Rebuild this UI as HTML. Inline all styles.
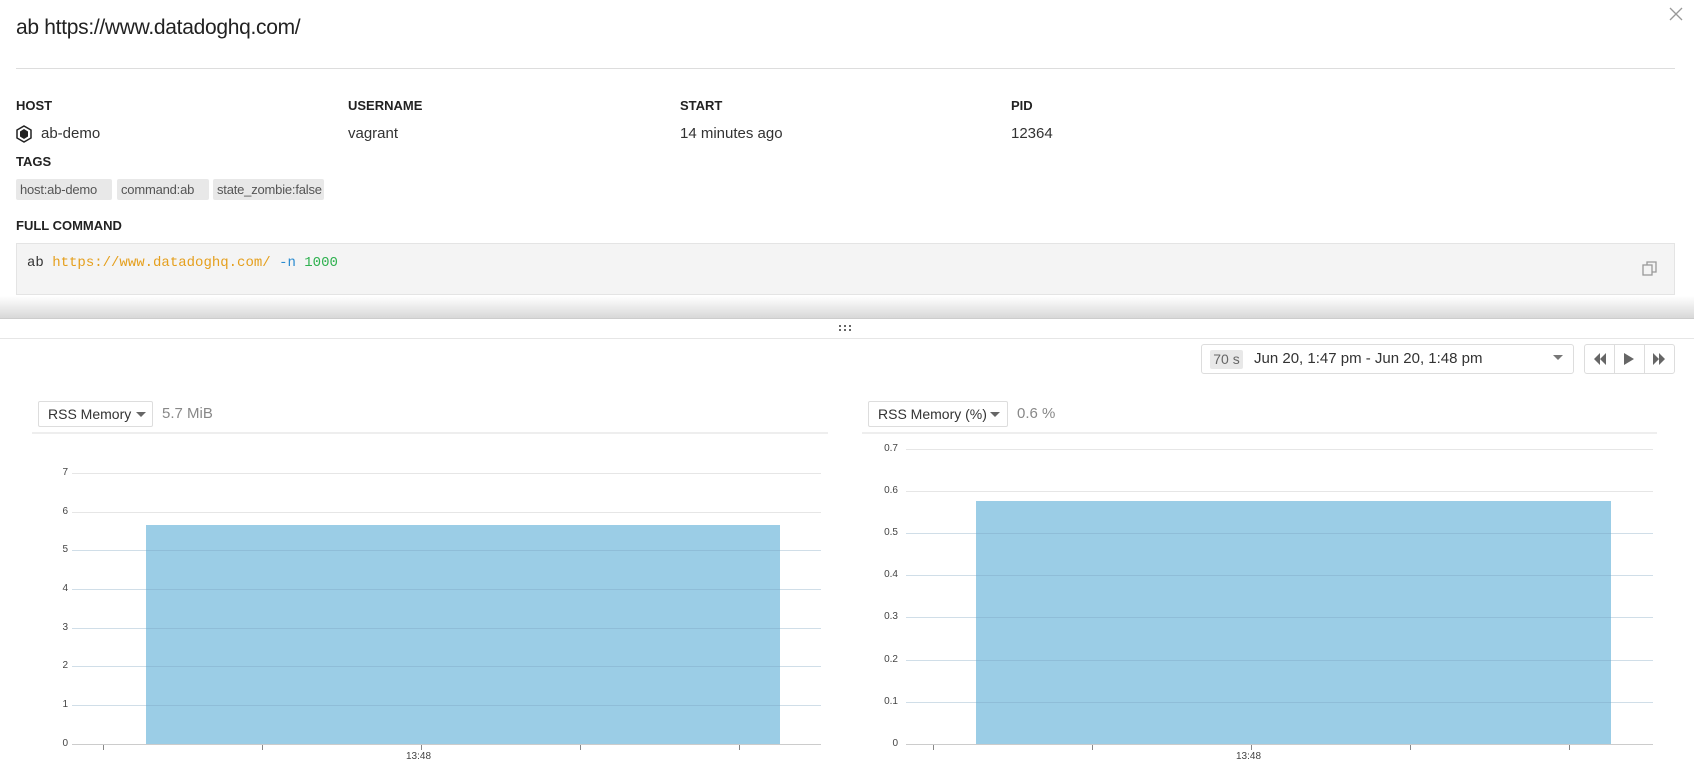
<!DOCTYPE html>
<html><head><meta charset="utf-8"><style>
*{margin:0;padding:0;box-sizing:border-box}
body{width:1694px;height:771px;overflow:hidden;background:#fff;font-family:"Liberation Sans",sans-serif;color:#333;position:relative}
.a{position:absolute}
.lbl{font-size:13px;font-weight:bold;color:#222}
.val{font-size:15px;color:#333}
.tag{position:absolute;top:179px;height:21px;background:#e8e8e8;border-radius:2px;font-size:13px;color:#555;line-height:21px;padding:0 4px;white-space:nowrap;letter-spacing:-0.2px}
.g{position:absolute;height:1px;background:#e6e6e6}
.yl{position:absolute;font-size:10px;color:#444;text-align:right;width:20px}
.tk{position:absolute;width:1px;height:5px;background:#888}
</style></head><body>
<div class="a" style="left:16px;top:16px;font-size:21px;color:#222;letter-spacing:-0.3px">ab https://www.datadoghq.com/</div>
<svg class="a" style="left:1668px;top:6px" width="16" height="16"><path d="M2 2L14 14M14 2L2 14" stroke="#999" stroke-width="1.3"/></svg>
<div class="g" style="left:16px;top:68px;width:1659px;background:#ddd"></div>
<div class="a lbl" style="left:16px;top:98px">HOST</div>
<div class="a lbl" style="left:348px;top:98px">USERNAME</div>
<div class="a lbl" style="left:680px;top:98px">START</div>
<div class="a lbl" style="left:1011px;top:98px">PID</div>
<svg class="a" style="left:16px;top:125px" width="16" height="18"><path d="M8 1L15 5V13L8 17L1 13V5Z" fill="none" stroke="#222" stroke-width="1.5"/><path d="M8 4L12 6.5V11.5L8 14L4 11.5V6.5Z" fill="#222"/></svg>
<div class="a val" style="left:41px;top:125px">ab-demo</div>
<div class="a val" style="left:348px;top:125px">vagrant</div>
<div class="a val" style="left:680px;top:125px">14 minutes ago</div>
<div class="a val" style="left:1011px;top:125px">12364</div>
<div class="a lbl" style="left:16px;top:154px">TAGS</div>
<div class="tag" style="left:16px;width:96px">host:ab-demo</div>
<div class="tag" style="left:117px;width:92px">command:ab</div>
<div class="tag" style="left:213px;width:111px">state_zombie:false</div>
<div class="a lbl" style="left:16px;top:218px">FULL COMMAND</div>
<div class="a" style="left:16px;top:243px;width:1659px;height:52px;background:#f4f4f4;border:1px solid #e4e4e4"></div>
<div class="a" style="left:27px;top:255px;font-family:'Liberation Mono',monospace;font-size:14px;color:#333">ab <span style="color:#e59f1c">https://www.datadoghq.com/</span> <span style="color:#2a8bd0">-n</span> <span style="color:#2fb14f">1000</span></div>
<svg class="a" style="left:1641px;top:260px" width="18" height="18"><rect x="2" y="5" width="9" height="10" fill="none" stroke="#999" stroke-width="1.3"/><path d="M6 5V2H15V12H11" fill="none" stroke="#999" stroke-width="1.3"/></svg>
<div class="a" style="left:0;top:296px;width:1694px;height:22px;background:linear-gradient(#fff,#d8d8d8)"></div>
<div class="a" style="left:0;top:318px;width:1694px;height:1px;background:#ccc"></div>
<svg class="a" style="left:838px;top:324px" width="16" height="8"><g fill="#666"><rect x="1" y="1" width="2" height="2"/><rect x="6" y="1" width="2" height="2"/><rect x="11" y="1" width="2" height="2"/><rect x="1" y="5" width="2" height="2"/><rect x="6" y="5" width="2" height="2"/><rect x="11" y="5" width="2" height="2"/></g></svg>
<div class="g" style="left:0;top:338px;width:1694px"></div>
<div class="a" style="left:1201px;top:344px;width:373px;height:30px;border:1px solid #ddd;border-radius:3px"></div>
<div class="a" style="left:1210px;top:350px;width:33px;height:19px;background:#e8e8e8;border-radius:2px;font-size:14px;color:#666;line-height:19px;text-align:center">70 s</div>
<div class="a" style="left:1254px;top:350px;font-size:15px;color:#333">Jun 20, 1:47 pm - Jun 20, 1:48 pm</div>
<svg class="a" style="left:1553px;top:355px" width="10" height="6"><path d="M0 0H10L5 5Z" fill="#777"/></svg>
<div class="a" style="left:1584px;top:344px;width:91px;height:30px;border:1px solid #ddd;border-radius:3px"></div>
<div class="a" style="left:1614px;top:344px;width:1px;height:30px;background:#ddd"></div>
<div class="a" style="left:1644px;top:344px;width:1px;height:30px;background:#ddd"></div>
<svg class="a" style="left:1584px;top:344px" width="91" height="30"><path d="M16 9L10 15L16 21ZM22 9L16 15L22 21Z" fill="#666"/><path d="M40 9L50 15L40 21Z" fill="#666"/><path d="M69 9L75 15L69 21ZM75 9L81 15L75 21Z" fill="#666"/></svg>

<!-- left chart -->
<div class="a" style="left:38px;top:401px;width:115px;height:26px;border:1px solid #ddd;border-radius:2px;font-size:14px;color:#333;line-height:24px;padding-left:9px">RSS Memory</div>
<svg class="a" style="left:136px;top:412px" width="10" height="6"><path d="M0 0H10L5 5Z" fill="#666"/></svg>
<div class="a" style="left:162px;top:405px;font-size:15px;color:#888">5.7 MiB</div>
<div class="g" style="left:32px;top:432px;width:796px;height:2px;background:#eee"></div>
<div class="a" style="left:146px;top:525px;width:634px;height:219px;background:#9bcde6"></div>
<div class="g" style="left:72px;top:473px;width:749px"></div>
<div class="g" style="left:72px;top:512px;width:749px"></div>
<div class="g" style="left:72px;top:550px;width:749px;background:rgba(120,160,190,.35)"></div>
<div class="g" style="left:72px;top:589px;width:749px;background:rgba(120,160,190,.35)"></div>
<div class="g" style="left:72px;top:628px;width:749px;background:rgba(120,160,190,.35)"></div>
<div class="g" style="left:72px;top:666px;width:749px;background:rgba(120,160,190,.35)"></div>
<div class="g" style="left:72px;top:705px;width:749px;background:rgba(120,160,190,.35)"></div>
<div class="g" style="left:72px;top:744px;width:749px;background:#ccc"></div>
<div class="yl" style="left:48px;top:467px">7</div>
<div class="yl" style="left:48px;top:506px">6</div>
<div class="yl" style="left:48px;top:544px">5</div>
<div class="yl" style="left:48px;top:583px">4</div>
<div class="yl" style="left:48px;top:622px">3</div>
<div class="yl" style="left:48px;top:660px">2</div>
<div class="yl" style="left:48px;top:699px">1</div>
<div class="yl" style="left:48px;top:738px">0</div>
<div class="tk" style="left:103px;top:745px"></div>
<div class="tk" style="left:262px;top:745px"></div>
<div class="tk" style="left:421px;top:745px"></div>
<div class="tk" style="left:580px;top:745px"></div>
<div class="tk" style="left:739px;top:745px"></div>
<div class="a" style="left:406px;top:751px;font-size:10px;color:#444">13:48</div>

<!-- right chart -->
<div class="a" style="left:868px;top:401px;width:140px;height:26px;border:1px solid #ddd;border-radius:2px;font-size:14px;color:#333;line-height:24px;padding-left:9px">RSS Memory (%)</div>
<svg class="a" style="left:990px;top:412px" width="10" height="6"><path d="M0 0H10L5 5Z" fill="#666"/></svg>
<div class="a" style="left:1017px;top:405px;font-size:15px;color:#888">0.6 %</div>
<div class="g" style="left:862px;top:432px;width:795px;height:2px;background:#eee"></div>
<div class="a" style="left:976px;top:501px;width:635px;height:243px;background:#9bcde6"></div>
<div class="g" style="left:906px;top:449px;width:747px"></div>
<div class="g" style="left:906px;top:491px;width:747px"></div>
<div class="g" style="left:906px;top:533px;width:747px;background:rgba(120,160,190,.35)"></div>
<div class="g" style="left:906px;top:575px;width:747px;background:rgba(120,160,190,.35)"></div>
<div class="g" style="left:906px;top:617px;width:747px;background:rgba(120,160,190,.35)"></div>
<div class="g" style="left:906px;top:660px;width:747px;background:rgba(120,160,190,.35)"></div>
<div class="g" style="left:906px;top:702px;width:747px;background:rgba(120,160,190,.35)"></div>
<div class="g" style="left:906px;top:744px;width:747px;background:#ccc"></div>
<div class="yl" style="left:878px;top:443px">0.7</div>
<div class="yl" style="left:878px;top:485px">0.6</div>
<div class="yl" style="left:878px;top:527px">0.5</div>
<div class="yl" style="left:878px;top:569px">0.4</div>
<div class="yl" style="left:878px;top:611px">0.3</div>
<div class="yl" style="left:878px;top:654px">0.2</div>
<div class="yl" style="left:878px;top:696px">0.1</div>
<div class="yl" style="left:878px;top:738px">0</div>
<div class="tk" style="left:933px;top:745px"></div>
<div class="tk" style="left:1092px;top:745px"></div>
<div class="tk" style="left:1251px;top:745px"></div>
<div class="tk" style="left:1410px;top:745px"></div>
<div class="tk" style="left:1569px;top:745px"></div>
<div class="a" style="left:1236px;top:751px;font-size:10px;color:#444">13:48</div>
</body></html>
